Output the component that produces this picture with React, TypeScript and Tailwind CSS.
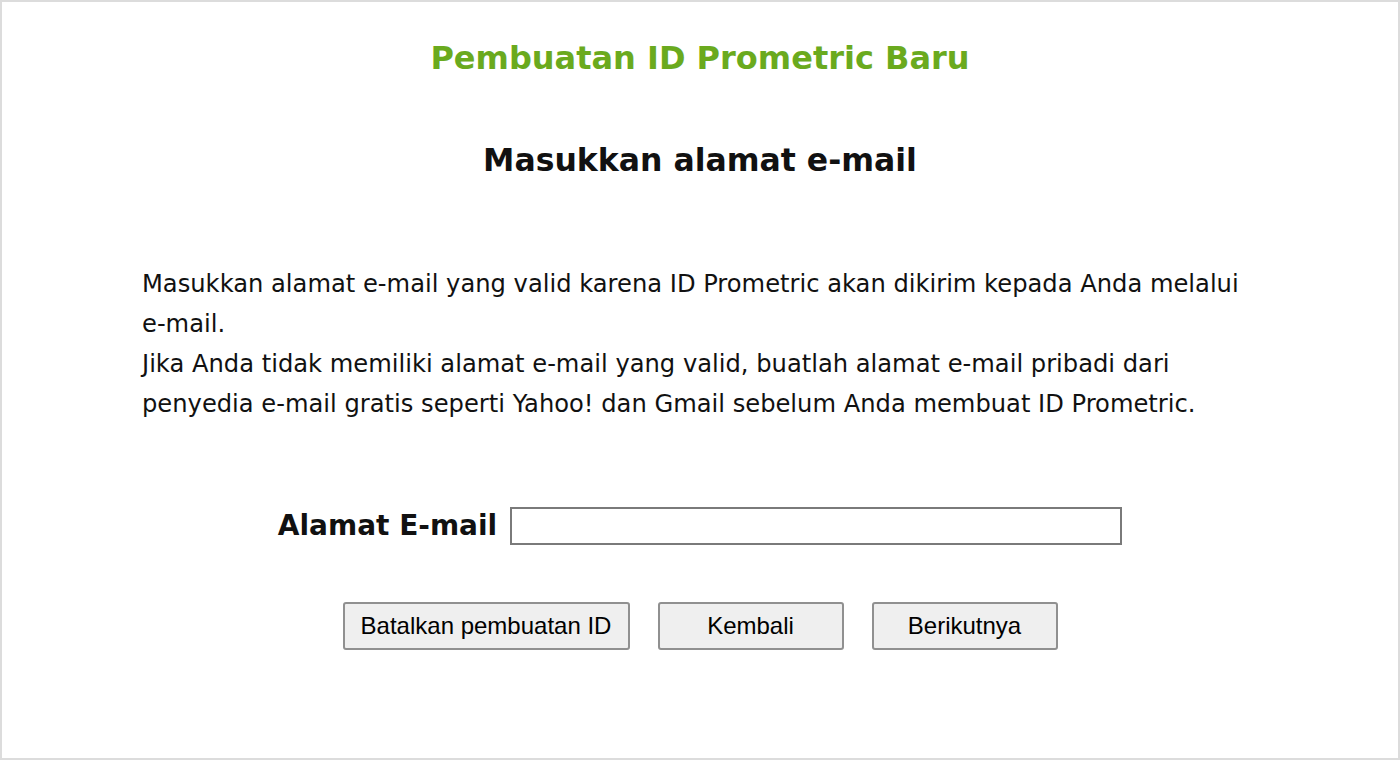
import React from "react";

const tahoma = { fontFamily: '"DejaVu Sans", sans-serif' };

export default function App() {
  return (
    <div className="w-full h-[760px] border-2 border-[#dcdcdc] bg-white flex flex-col items-center text-black" style={tahoma}>
      <h1 className="mt-[38px] text-[32px] leading-[36px] font-bold text-[#6aaa1e]">Pembuatan ID Prometric Baru</h1>
      <h2 className="mt-[66px] text-[31.5px] leading-[36px] font-bold text-[#111]">Masukkan alamat e-mail</h2>
      <div className="mt-[86px] self-stretch pl-[140px] pr-[140px] text-[24.2px] leading-[40px] text-[#111]">
        <p>Masukkan alamat e-mail yang valid karena ID Prometric akan dikirim kepada Anda melalui e-mail.</p>
        <p>Jika Anda tidak memiliki alamat e-mail yang valid, buatlah alamat e-mail pribadi dari penyedia e-mail gratis seperti Yahoo! dan Gmail sebelum Anda membuat ID Prometric.</p>
      </div>
      <div className="mt-[81px] flex items-center gap-[13px]">
        <label className="text-[28px] font-bold text-[#111]">Alamat E-mail</label>
        <input type="text" className="w-[612px] h-[38px] border-2 border-[#7a7a7a] bg-white outline-none" />
      </div>
      <div className="mt-[55px] flex items-center gap-[28px]" style={{ fontFamily: '"Liberation Sans", Arial, sans-serif' }}>
        <button className="w-[287px] h-[48px] border-2 border-[#909090] rounded-[3px] bg-[#efefef] text-[24px] text-black">Batalkan pembuatan ID</button>
        <button className="w-[186px] h-[48px] border-2 border-[#909090] rounded-[3px] bg-[#efefef] text-[24px] text-black">Kembali</button>
        <button className="w-[186px] h-[48px] border-2 border-[#909090] rounded-[3px] bg-[#efefef] text-[24px] text-black">Berikutnya</button>
      </div>
    </div>
  );
}
